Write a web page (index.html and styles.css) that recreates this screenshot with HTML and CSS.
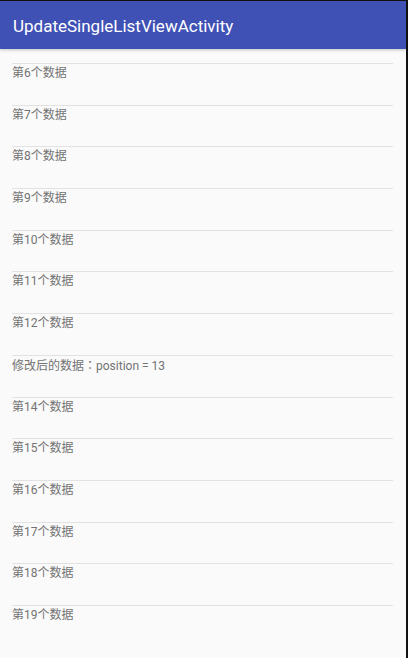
FILE: index.html
```html
<!DOCTYPE html>
<html lang="zh-CN">
<head>
<meta charset="utf-8">
<title>UpdateSingleListViewActivity</title>
<link rel="stylesheet" href="styles.css">
</head>
<body>
<div class="screen">
  <header class="appbar"><span class="title">UpdateSingleListViewActivity</span></header>
  <main class="list">
    <div class="item">第6个数据</div>
    <div class="item">第7个数据</div>
    <div class="item">第8个数据</div>
    <div class="item">第9个数据</div>
    <div class="item">第10个数据</div>
    <div class="item">第11个数据</div>
    <div class="item">第12个数据</div>
    <div class="item">修改后的数据<span class="colon" lang="zh-Hant">：</span>position = 13</div>
    <div class="item">第14个数据</div>
    <div class="item">第15个数据</div>
    <div class="item">第16个数据</div>
    <div class="item">第17个数据</div>
    <div class="item">第18个数据</div>
    <div class="item">第19个数据</div>
  </main>
</div>
</body>
</html>
```
FILE: styles.css
```css
html, body {
  margin: 0;
  padding: 0;
  background: #111;
}
.screen {
  box-sizing: border-box;
  width: 408px;
  height: 658px;
  border-top: 1px solid #111;
  border-right: 2px solid #111;
  background: #fafafa;
  display: flex;
  flex-direction: column;
  overflow: hidden;
  font-family: Roboto, "Noto Sans CJK SC", sans-serif;
}
.appbar {
  height: 48px;
  flex: none;
  background: #3f51b5;
  display: flex;
  align-items: center;
  padding-left: 13px;
  box-shadow: 0 1px 3px rgba(0, 0, 0, 0.22);
  position: relative;
  z-index: 1;
}
.title {
  color: #fff;
  font-size: 17px;
  line-height: 24px;
  padding-top: 2px;
}
.list {
  padding: 14px 13px 0 12px;
  display: flex;
  flex-direction: column;
}
.item {
  box-sizing: border-box;
  height: 41.69px;
  flex: none;
  border-top: 1px solid #e2e2e2;
  padding-top: 2px;
  font-size: 12px;
  line-height: 14px;
  color: #737373;
}
.colon {
  font-family: "Noto Sans CJK TC", sans-serif;
}
```
